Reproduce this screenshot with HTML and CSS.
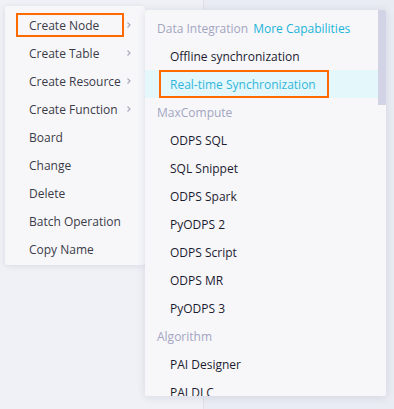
FILE: index.html
```html
<!DOCTYPE html>
<html lang='en'>

<head>
  <meta charset='utf-8'>
  <meta name='viewport' content='width=device-width, initial-scale=1'>
  <title>Context menu</title>
  <link rel="stylesheet" href="styles.css">
</head>

<body>
  <div class="layout">
    <aside class="side"></aside>
    <main class="main"></main>
  </div>

  <ul class="menu">
    <li class="menu-item has-sub">
      <span>Create Node</span>
      <svg class="arrow" width="6" height="8" viewBox="0 0 6 8"><path d="M1.5 1.5 4 4 1.5 6.5" fill="none" stroke="#a9abbd" stroke-width="1.2"/></svg>
      <i class="mark mark-node"></i>
    </li>
    <li class="menu-item has-sub">
      <span>Create Table</span>
      <svg class="arrow" width="6" height="8" viewBox="0 0 6 8"><path d="M1.5 1.5 4 4 1.5 6.5" fill="none" stroke="#a9abbd" stroke-width="1.2"/></svg>
    </li>
    <li class="menu-item has-sub">
      <span>Create Resource</span>
      <svg class="arrow" width="6" height="8" viewBox="0 0 6 8"><path d="M1.5 1.5 4 4 1.5 6.5" fill="none" stroke="#a9abbd" stroke-width="1.2"/></svg>
    </li>
    <li class="menu-item has-sub">
      <span>Create Function</span>
      <svg class="arrow" width="6" height="8" viewBox="0 0 6 8"><path d="M1.5 1.5 4 4 1.5 6.5" fill="none" stroke="#a9abbd" stroke-width="1.2"/></svg>
    </li>
    <li class="menu-item">Board</li>
    <li class="menu-item">Change</li>
    <li class="menu-item">Delete</li>
    <li class="menu-item">Batch Operation</li>
    <li class="menu-item">Copy Name</li>
  </ul>

  <div class="submenu">
    <ul class="submenu-list">
      <li class="group">Data Integration <a href="#" class="more">More Capabilities</a></li>
      <li class="sub-item">Offline synchronization</li>
      <li class="sub-item active">Real-time Synchronization<i class="mark mark-rt"></i></li>
      <li class="group">MaxCompute</li>
      <li class="sub-item">ODPS SQL</li>
      <li class="sub-item">SQL Snippet</li>
      <li class="sub-item">ODPS Spark</li>
      <li class="sub-item">PyODPS 2</li>
      <li class="sub-item">ODPS Script</li>
      <li class="sub-item">ODPS MR</li>
      <li class="sub-item">PyODPS 3</li>
      <li class="group">Algorithm</li>
      <li class="sub-item">PAI Designer</li>
      <li class="sub-item">PAI DLC</li>
    </ul>
    <div class="scroll-thumb"></div>
  </div>
</body>

</html>
```

FILE: styles.css
```css
* {
  margin: 0;
  padding: 0;
  box-sizing: border-box;
}

ul {
  list-style: none;
}

html,
body {
  width: 100%;
  height: 100%;
}

body {
  font-family: "Open Sans", "Noto Sans", sans-serif;
  font-size: 12px;
  background-color: #eceef4;
  overflow: hidden;
}

.layout {
  display: flex;
  height: 100%;
}

.side {
  width: 204px;
  background-color: #f0f1f6;
  border-right: 1px solid #dfe1ea;
}

.main {
  flex: 1;
  background-color: #eaecf3;
}

.menu {
  position: absolute;
  left: 5px;
  top: 6px;
  width: 140px;
  padding: 5px 0 2px;
  background-color: #f7f7fa;
  border-radius: 3px;
  box-shadow: 0 1px 6px rgba(60, 70, 110, 0.12);
}

.menu-item {
  position: relative;
  display: flex;
  align-items: center;
  height: 28px;
  padding-left: 24px;
  color: #3b3b48;
}

.menu-item .arrow {
  position: absolute;
  left: 121px;
  top: 10px;
}

.mark {
  position: absolute;
  border: 2px solid #ff6a00;
  pointer-events: none;
}

.mark-node {
  left: 11px;
  top: 2px;
  width: 108px;
  height: 24px;
}

.submenu {
  position: absolute;
  left: 145px;
  top: 10px;
  width: 241px;
  height: 386px;
  overflow: hidden;
  background-color: #f7f7fa;
  border-radius: 2px;
  box-shadow: 0 1px 8px rgba(60, 70, 110, 0.14);
}

.submenu-list {
  width: 233px;
  padding-top: 4px;
}

.group,
.sub-item {
  position: relative;
  display: flex;
  align-items: center;
  height: 28px;
}

.group {
  padding-left: 12px;
  color: #a3a5c0;
}

.group .more {
  margin-left: 5px;
  color: #1cb4d8;
  text-decoration: none;
}

.sub-item {
  padding-left: 25px;
  color: #1c1c30;
}

.sub-item.active {
  background-color: #e4f8fb;
  color: #33b5db;
}

.mark-rt {
  left: 14px;
  top: 0;
  width: 170px;
  height: 28px;
}

.scroll-thumb {
  position: absolute;
  right: 0;
  top: 0;
  width: 8px;
  height: 95px;
  background-color: #d2d4e6;
}
```
